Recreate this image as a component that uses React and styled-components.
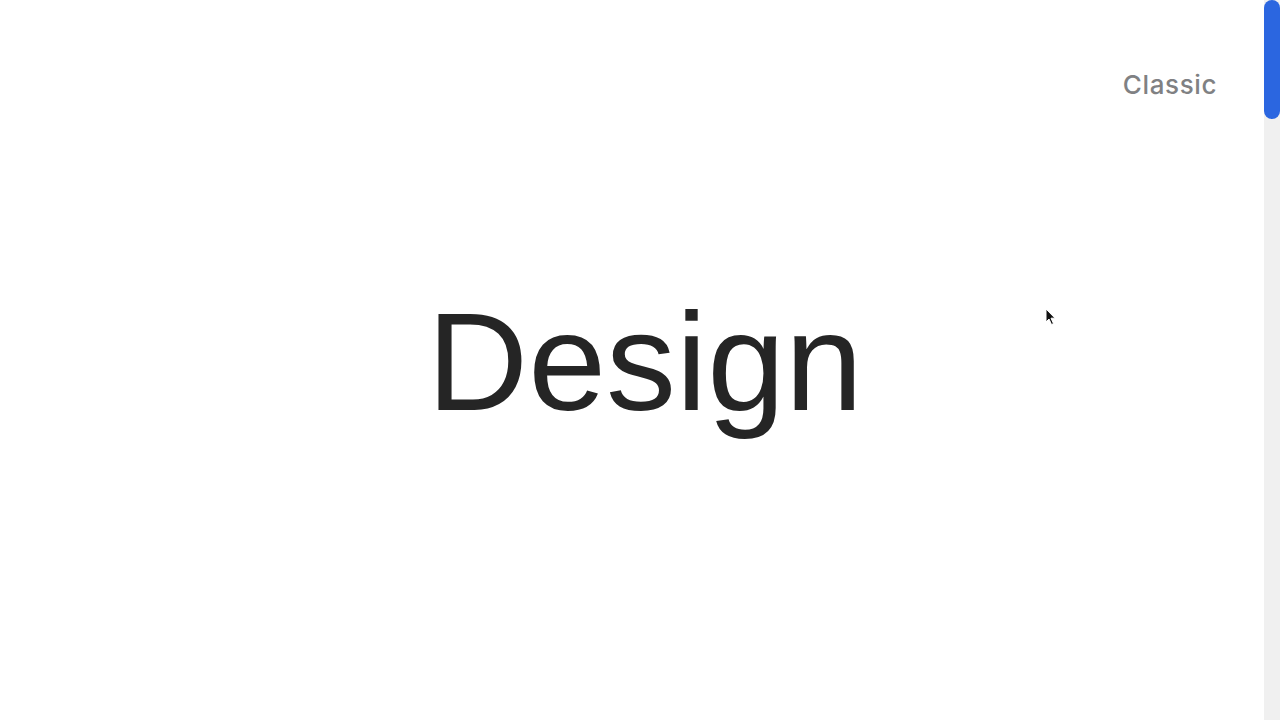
import styled, { createGlobalStyle } from 'styled-components';

const GlobalStyle = createGlobalStyle`
  html, body {
    margin: 0;
    padding: 0;
    background: #ffffff;
    overflow: hidden;
  }
`;

const Page = styled.div`
  position: relative;
  display: flex;
  width: 1280px;
  height: 720px;
`;

const Main = styled.main`
  flex: 1;
  display: flex;
  flex-direction: column;
`;

const Header = styled.header`
  display: flex;
  justify-content: flex-end;
  padding: 72px 47px 0 0;
`;

const Mode = styled.span`
  font-family: Inter, 'Liberation Sans', sans-serif;
  font-size: 26px;
  font-weight: 500;
  line-height: 1;
  color: #808183;
  letter-spacing: 0.6px;
`;

const Hero = styled.section`
  flex: 1;
  display: flex;
  justify-content: center;
  align-items: center;
  padding: 0 0 94px 26px;
`;

const Word = styled.h1`
  margin: 0;
  font-family: 'Liberation Sans', Arial, sans-serif;
  font-size: 140px;
  font-weight: 400;
  color: #252525;
  line-height: 1;
`;

const Track = styled.div`
  width: 16px;
  background: #f0f0f0;
`;

const Thumb = styled.div`
  height: ${(p) => p.$size}px;
  background: #2b66e0;
  border-radius: 8px;
`;

const Pointer = styled.svg`
  position: absolute;
  left: ${(p) => p.$x}px;
  top: ${(p) => p.$y}px;
`;

const App = () => (
  <Page>
    <GlobalStyle />
    <Main>
      <Header>
        <Mode>Classic</Mode>
      </Header>
      <Hero>
        <Word>Design</Word>
      </Hero>
    </Main>
    <Track>
      <Thumb $size={119} />
    </Track>
    {/* mouse pointer */}
    <Pointer $x={1045} $y={308} width="12" height="19" viewBox="0 0 12 19">
      <path d="M1 1 L1 14 L4 11 L6.5 16.5 L8.5 15.6 L6 10.2 L10 10.2 Z" fill="#111" stroke="#fff" strokeWidth="1" />
    </Pointer>
  </Page>
);

export default App;
